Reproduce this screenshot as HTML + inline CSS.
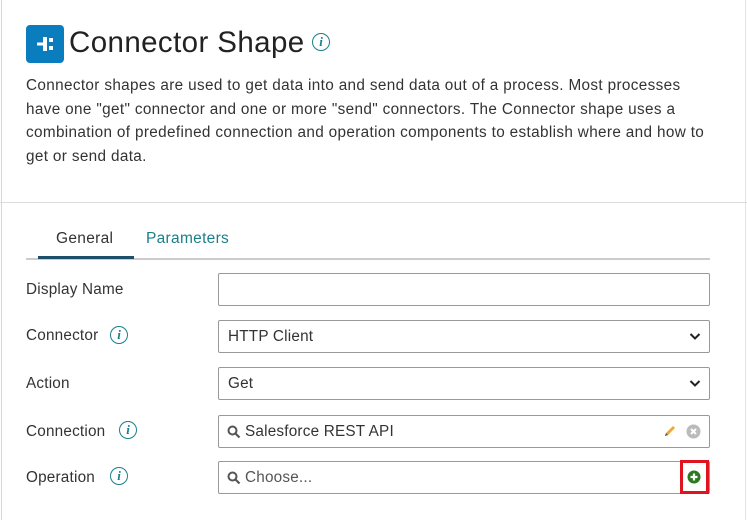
<!DOCTYPE html>
<html><head><style>
body{margin:0;width:747px;height:512px;overflow:hidden;background:#fff;font-family:"Liberation Sans",sans-serif;color:#333;position:relative}
.frame{position:absolute;left:1px;top:0;width:743px;height:520px;border-left:1px solid #d6d6d6;border-right:1px solid #e3e3e3}
.hr{position:absolute;left:0;top:202px;width:747px;height:1px;background:#dcdcdc}
.logo{position:absolute;left:26px;top:25px;width:38px;height:38px;background:#0a7dbf;border-radius:4px}
h1{position:absolute;left:69px;top:26px;margin:0;font-weight:normal;font-size:29.5px;color:#222;letter-spacing:.4px}
.info{position:absolute;width:16px;height:16px;border:1.5px solid #1a7f8a;border-radius:50%;color:#1a7f8a;font:italic bold 13px "Liberation Serif",serif;text-align:center;line-height:16px}
.desc{position:absolute;left:26px;top:74px;width:690px;font-size:15.3px;line-height:23.5px;color:#333;letter-spacing:.35px}
.tabs{position:absolute;left:26px;top:258px;width:684px;height:2px;background:#ccc}
.tab{position:absolute;top:230px;font-size:15.5px;letter-spacing:.3px}
.lbl{position:absolute;left:26px;font-size:15.3px;color:#333;letter-spacing:.2px}
.inp{position:absolute;left:218px;width:490px;height:31px;border:1px solid #999;border-radius:2px;font-size:15.3px;line-height:31px;box-sizing:content-box;letter-spacing:.2px}
.inp span{position:absolute;left:9px}
.chev{position:absolute;right:8px;top:11px}
</style></head><body>
<div class="frame"></div>
<div class="logo"><svg width="38" height="38" viewBox="0 0 38 38"><rect x="11" y="17.5" width="6" height="3" fill="#fff"/><path d="M17 12h4v14h-4z" fill="#fff"/><rect x="23" y="13" width="4" height="4" fill="#fff"/><rect x="23" y="21" width="4" height="4" fill="#fff"/></svg></div>
<h1>Connector Shape</h1>
<div class="info" style="left:312px;top:33px">i</div>
<div class="desc">Connector shapes are used to get data into and send data out of a process. Most processes have one "get" connector and one or more "send" connectors. The Connector shape uses a combination of predefined connection and operation components to establish where and how to get or send data.</div>
<div class="hr"></div>
<div class="tabs"></div>
<div style="position:absolute;left:38px;top:256px;width:96px;height:3px;background:#1d4f6b"></div>
<div class="tab" style="left:56px;color:#333">General</div>
<div class="tab" style="left:146px;color:#1a7f8a">Parameters</div>

<div class="lbl" style="top:281px">Display Name</div>
<div class="inp" style="top:273px"></div>

<div class="lbl" style="top:327px">Connector</div>
<div class="info" style="left:110px;top:326px">i</div>
<div class="inp" style="top:320px"><span>HTTP Client</span><svg class="chev" width="12" height="9" viewBox="0 0 12 9"><path d="M1.5 2l4.5 4.5L10.5 2" stroke="#222" stroke-width="2" fill="none"/></svg></div>

<div class="lbl" style="top:375px">Action</div>
<div class="inp" style="top:367px"><span>Get</span><svg class="chev" width="12" height="9" viewBox="0 0 12 9"><path d="M1.5 2l4.5 4.5L10.5 2" stroke="#222" stroke-width="2" fill="none"/></svg></div>

<div class="lbl" style="top:423px">Connection</div>
<div class="info" style="left:119px;top:421px">i</div>
<div class="inp" style="top:415px"><svg style="position:absolute;left:8px;top:9px" width="14" height="14" viewBox="0 0 14 14"><circle cx="5.5" cy="5.5" r="4" stroke="#555" stroke-width="2" fill="none"/><path d="M8.5 8.5l4 4" stroke="#555" stroke-width="2.2"/></svg><span style="left:26px">Salesforce REST API</span>
<svg style="position:absolute;left:444px;top:8px" width="14" height="14" viewBox="0 0 14 14"><path d="M2 12l1-3 7-7 2 2-7 7z" fill="#f0a830"/><path d="M2 12l1-3 2 2z" fill="#555"/></svg>
<svg style="position:absolute;left:467px;top:8px" width="15" height="15" viewBox="0 0 15 15"><circle cx="7.5" cy="7.5" r="7" fill="#bbb"/><path d="M5 5l5 5M10 5l-5 5" stroke="#fff" stroke-width="2"/></svg></div>

<div class="lbl" style="top:469px">Operation</div>
<div class="info" style="left:110px;top:467px">i</div>
<div class="inp" style="top:461px"><svg style="position:absolute;left:8px;top:9px" width="14" height="14" viewBox="0 0 14 14"><circle cx="5.5" cy="5.5" r="4" stroke="#555" stroke-width="2" fill="none"/><path d="M8.5 8.5l4 4" stroke="#555" stroke-width="2.2"/></svg><span style="left:26px;color:#555">Choose...</span></div>
<div style="position:absolute;left:680px;top:460px;width:23px;height:28px;border:3px solid #e0141e"></div>
<svg style="position:absolute;left:687px;top:470px" width="14" height="14" viewBox="0 0 14 14"><circle cx="7" cy="7" r="6.5" fill="#2a7a1e"/><path d="M7 3.5v7M3.5 7h7" stroke="#fff" stroke-width="2.2"/></svg>
</body></html>
